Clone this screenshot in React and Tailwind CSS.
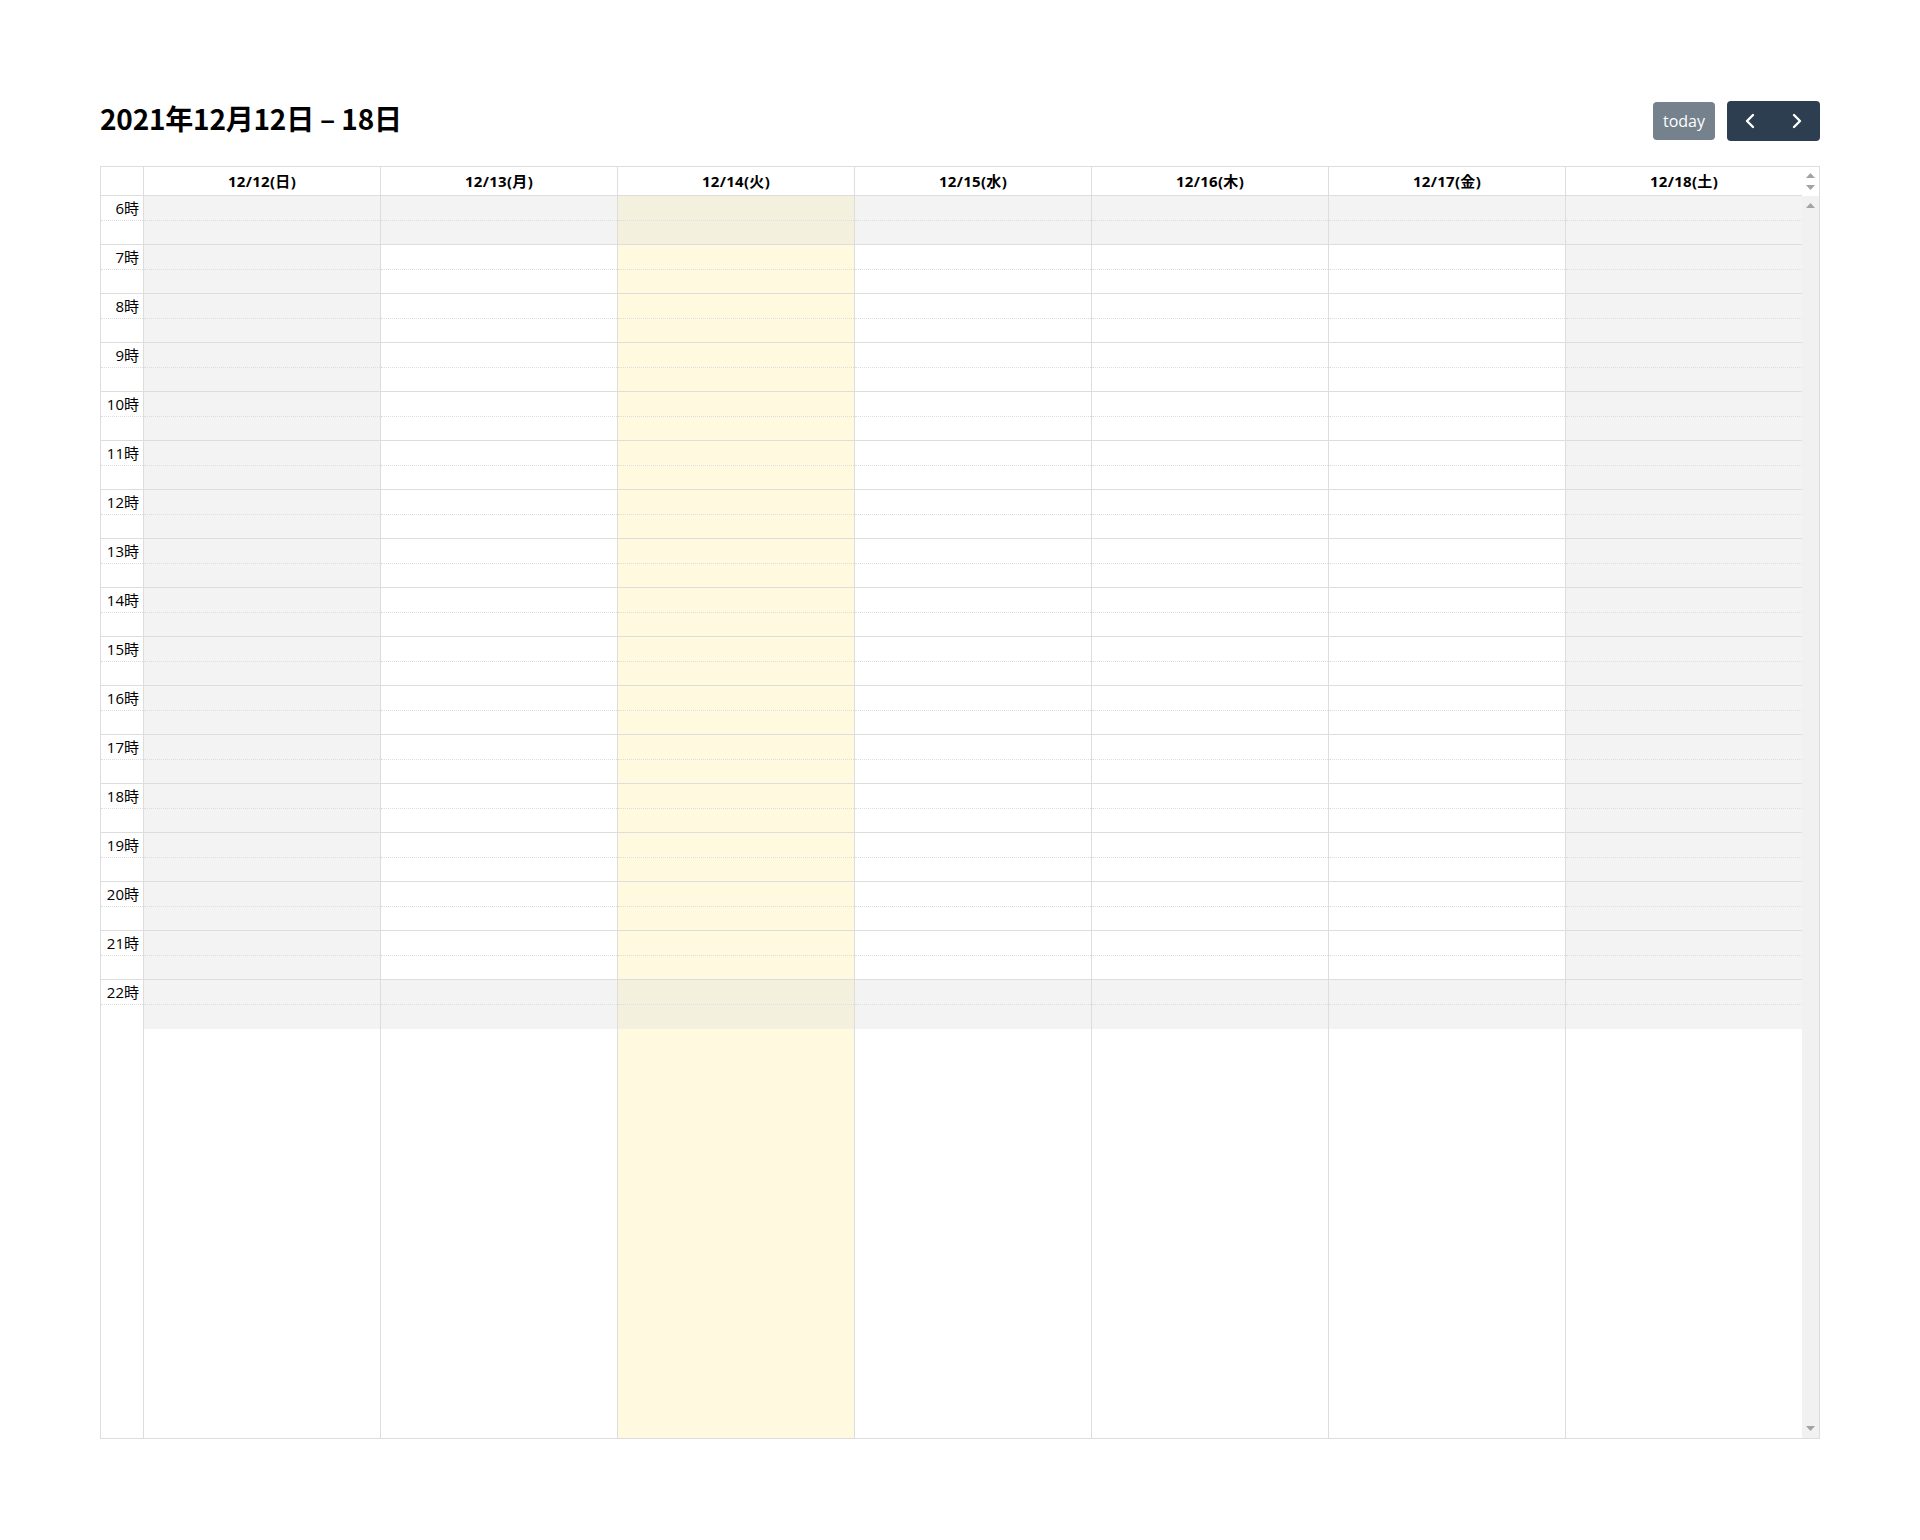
import React from 'react';

const days = ['12/12(日)', '12/13(月)', '12/14(火)', '12/15(水)', '12/16(木)', '12/17(金)', '12/18(土)'];
const TODAY = 2;
const slots = Array.from({ length: 34 }, (_, i) => i);

function slotBg(day, slot) {
  const off = day === 0 || day === 6 || slot < 2 || slot >= 32;
  if (off && day === TODAY) return 'bg-[#f3f0dd]';
  if (off) return 'bg-[#f3f3f3]';
  if (day === TODAY) return 'bg-[#fffadf]';
  return 'bg-white';
}

function slotBorder(slot) {
  if (slot === 33) return '';
  return slot % 2 === 0 ? 'border-b border-dotted border-[#dddddd]' : 'border-b border-solid border-[#dddddd]';
}

function Arrow({ down }) {
  return (
    <svg width="9" height="5" viewBox="0 0 9 5" className="block">
      <polygon points={down ? '0,0 9,0 4.5,5' : '0,5 9,5 4.5,0'} fill="#a3a3a3" />
    </svg>
  );
}

function Chevron({ left }) {
  return (
    <svg width="14" height="18" viewBox="0 0 14 18" fill="none">
      <polyline
        points={left ? '10,3 4,9 10,15' : '4,3 10,9 4,15'}
        stroke="white"
        strokeWidth="2.4"
        strokeLinecap="round"
        strokeLinejoin="round"
      />
    </svg>
  );
}

export default function App() {
  return (
    <div className="min-h-[1540px] bg-white px-[100px] pt-[101px] text-black font-['Noto_Sans_CJK_JP','Noto_Sans',sans-serif]">
      <div className="mb-[25px] flex h-[40px] items-center justify-between">
        <h2 className="mb-[6px] text-[28px] font-bold leading-none tracking-[-0.2px]">2021年12月12日 – 18日</h2>
        <div className="flex items-center gap-3">
          <button className="h-[38px] w-[62px] rounded-[4px] bg-[#2c3e50] font-['Open_Sans','Noto_Sans_CJK_JP',sans-serif] text-[16px] leading-none text-white opacity-65">
            today
          </button>
          <div className="flex h-[40px] overflow-hidden rounded-[4px] bg-[#2c3e50]">
            <button className="flex w-[46px] items-center justify-center">
              <Chevron left />
            </button>
            <button className="flex w-[47px] items-center justify-center">
              <Chevron />
            </button>
          </div>
        </div>
      </div>

      <div className="border border-[#dddddd] font-['Open_Sans','Noto_Sans_CJK_JP',sans-serif]">
        <div className="flex h-[29px]">
          <div className="w-[42px] border-b border-[#dddddd]" />
          {days.map((d) => (
            <div
              key={d}
              className="flex w-[237px] items-center justify-center border-b border-l border-[#dddddd] text-[15px] font-bold tracking-[0.3px]"
            >
              {d}
            </div>
          ))}
          <div className="flex w-[17px] flex-col items-center justify-center gap-[7px] bg-white">
            <Arrow />
            <Arrow down />
          </div>
        </div>

        <div className="flex h-[1242px]">
          <div className="flex w-[42px] flex-col">
            {slots.map((s) => (
              <div key={s} className={`h-[24.5px] shrink-0 ${slotBorder(s)}`}>
                {s % 2 === 0 ? (
                  <div className="pr-[4px] pt-[2px] text-right text-[15px] font-normal leading-[20px]">{6 + s / 2}時</div>
                ) : null}
              </div>
            ))}
            <div className="flex-1" />
          </div>

          {days.map((d, di) => (
            <div key={d} className="flex w-[237px] flex-col border-l border-[#dddddd]">
              {slots.map((s) => (
                <div key={s} className={`h-[24.5px] shrink-0 ${slotBg(di, s)} ${slotBorder(s)}`} />
              ))}
              <div className={`flex-1 ${di === TODAY ? 'bg-[#fffadf]' : 'bg-white'}`} />
            </div>
          ))}

          <div className="flex w-[17px] flex-col items-center justify-between bg-[#f1f1f1] py-[7px]">
            <Arrow />
            <Arrow down />
          </div>
        </div>
      </div>
    </div>
  );
}
